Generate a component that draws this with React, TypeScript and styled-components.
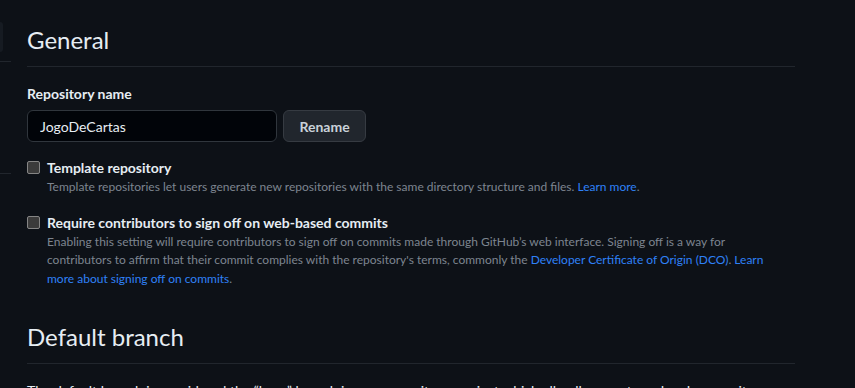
import * as React from "react";
import styled, { createGlobalStyle } from "styled-components";

const GlobalStyle = createGlobalStyle`
  html, body {
    margin: 0;
    padding: 0;
    background: #0d1117;
    color: #e6edf3;
    font-family: Lato, "Open Sans", "Liberation Sans", sans-serif;
    overflow: hidden;
  }
`;

const Layout = styled.div`
  display: flex;
  align-items: flex-start;
  gap: 16px;
  height: 388px;
  overflow: hidden;
`;

const SideNav = styled.nav`
  width: 11px;
  flex-shrink: 0;
  padding-top: 22px;
`;

const SideItem = styled.div`
  width: 3px;
  height: 30px;
  background: #161b22;
  border-radius: 0 6px 6px 0;
`;

const SideRule = styled.div<{ $top: number }>`
  height: 1px;
  background: #21262d;
  margin-top: ${(p) => p.$top}px;
`;

const Main = styled.main`
  width: 768px;
  flex-shrink: 0;
`;

const Subhead = styled.div<{ $spaced?: boolean }>`
  margin-top: ${(p) => (p.$spaced ? "31px" : "22px")};
  padding-bottom: 8px;
  margin-bottom: 16px;
  border-bottom: 1px solid #21262d;
`;

const Heading = styled.h2`
  margin: 0;
  font-size: 24px;
  line-height: 36px;
  font-weight: 400;
  color: #e6edf3;
`;

const Label = styled.label`
  display: block;
  font-size: 14px;
  line-height: 21px;
  font-weight: 700;
  margin-bottom: 6px;
`;

const RenameRow = styled.div`
  display: flex;
  gap: 6px;
`;

const TextInput = styled.input`
  box-sizing: border-box;
  width: 250px;
  height: 32px;
  padding: 0 12px;
  background: #010409;
  color: #e6edf3;
  border: 1px solid #30363d;
  border-radius: 6px;
  font-family: inherit;
  font-size: 14px;
  outline: none;
`;

const Button = styled.button`
  box-sizing: border-box;
  height: 32px;
  width: 83px;
  background: #21262d;
  color: #c9d1d9;
  border: 1px solid #363b42;
  border-radius: 6px;
  font-family: inherit;
  font-size: 14px;
  font-weight: 700;
`;

const CheckRow = styled.div`
  display: grid;
  grid-template-columns: 13px 1fr;
  column-gap: 7px;
  margin-top: 15px;
`;

const Box = styled.input`
  appearance: none;
  margin: 4px 0 0 0;
  width: 13px;
  height: 13px;
  box-sizing: border-box;
  background: #3b3b3b;
  border: 1px solid #858585;
  border-radius: 2px;
`;

const CheckLabel = styled.div`
  font-size: 14px;
  line-height: 21px;
  font-weight: 700;
`;

const Note = styled.p`
  grid-column: 2;
  max-width: 740px;
  margin: 0;
  font-size: 12px;
  line-height: 18.5px;
  color: #7d8590;
`;

const Link = styled.a`
  color: #2f81f7;
  text-decoration: none;
`;

const Body = styled.p`
  margin: 1px 0 0 0;
  font-size: 14px;
  line-height: 21px;
  color: #e6edf3;
  white-space: nowrap;
`;

export default function App(): JSX.Element {
  return (
    <>
      <GlobalStyle />
      <Layout>
        <SideNav>
          <SideItem />
          <SideRule $top={9} />
          <SideRule $top={111} />
        </SideNav>
        <Main>
          <Subhead>
            <Heading>General</Heading>
          </Subhead>
          <Label>Repository name</Label>
          <RenameRow>
            <TextInput defaultValue="JogoDeCartas" />
            <Button>Rename</Button>
          </RenameRow>
          <CheckRow>
            <Box type="checkbox" />
            <CheckLabel>Template repository</CheckLabel>
            <Note>
              Template repositories let users generate new repositories with the same directory
              structure and files. <Link href="#">Learn more</Link>.
            </Note>
          </CheckRow>
          <CheckRow>
            <Box type="checkbox" />
            <CheckLabel>Require contributors to sign off on web-based commits</CheckLabel>
            <Note>
              Enabling this setting will require contributors to sign off on commits made through
              GitHub’s web interface. Signing off is a way for contributors to affirm that their
              commit complies with the repository's terms, commonly the{" "}
              <Link href="#">Developer Certificate of Origin (DCO)</Link>.{" "}
              <Link href="#">Learn more about signing off on commits</Link>.
            </Note>
          </CheckRow>
          <Subhead $spaced>
            <Heading>Default branch</Heading>
          </Subhead>
          <Body>
            The default branch is considered the “base” branch in your repository, against which
            all pull requests and code commits are
          </Body>
        </Main>
      </Layout>
    </>
  );
}
